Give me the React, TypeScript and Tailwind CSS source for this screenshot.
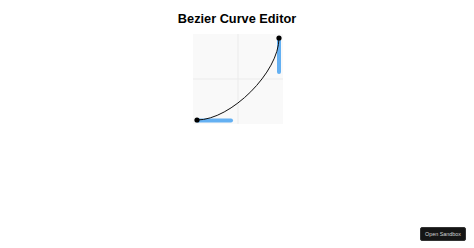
import React from 'react'

const font = { fontFamily: '"Liberation Sans", Arial, sans-serif' }

// curve points in the 90x90 editor box
const p0 = { x: 4, y: 86 }
const p1 = { x: 38, y: 86 }
const p2 = { x: 86, y: 38 }
const p3 = { x: 86, y: 4 }

function Editor() {
  return (
    <svg width={90} height={90} viewBox="0 0 90 90" className="block">
      <rect x={0} y={0} width={90} height={90} fill="#f9f9f9" />
      <line x1={45} y1={0} x2={45} y2={90} stroke="#ebebeb" strokeWidth={1} />
      <line x1={0} y1={45} x2={90} y2={45} stroke="#ebebeb" strokeWidth={1} />
      <line x1={p0.x} y1={p0.y + 0.5} x2={p1.x} y2={p1.y + 0.5} stroke="#64b0f2" strokeWidth={4} strokeLinecap="round" />
      <line x1={p3.x} y1={p3.y} x2={p2.x} y2={p2.y} stroke="#64b0f2" strokeWidth={4} strokeLinecap="round" />
      <path d={`M${p0.x} ${p0.y} C${p1.x} ${p1.y} ${p2.x} ${p2.y} ${p3.x} ${p3.y}`} fill="none" stroke="#111" strokeWidth={1} />
      <circle cx={p0.x} cy={p0.y} r={2.6} fill="#000" />
      <circle cx={p3.x} cy={p3.y} r={2.6} fill="#000" />
    </svg>
  )
}

export default function App() {
  return (
    <div className="relative h-[248px] w-[474px] bg-white" style={font}>
      <div className="flex flex-col items-center pt-[11px]">
        <h1 className="text-[12.75px] font-bold leading-[15px] text-black">Bezier Curve Editor</h1>
        <div className="mt-[8px] ml-[1px]">
          <Editor />
        </div>
      </div>
      <button className="fixed bottom-[7px] right-[8px] rounded-[2px] border border-[#333] bg-[#151515] px-[4px] py-[3px] text-[5.4px] leading-[6.5px] text-[#d4d4d4]">
        Open Sandbox
      </button>
    </div>
  )
}
